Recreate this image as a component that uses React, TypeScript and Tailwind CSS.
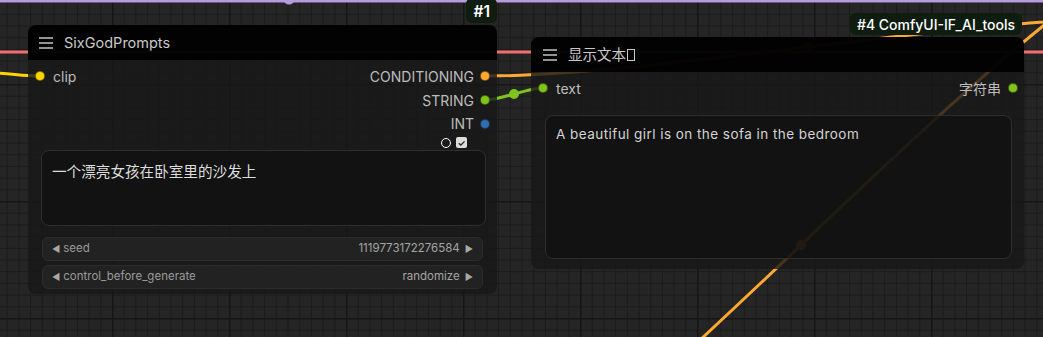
import React from 'react';

const ORANGE = '#ffa931';
const GREEN = '#7fc31c';

function Grid() {
  return (
    <svg className="absolute inset-0" width="1043" height="337">
      <defs>
        <pattern id="minor" x="6.7" y="2.1" width="11.7" height="11.7" patternUnits="userSpaceOnUse">
          <rect x="0" y="0" width="1" height="11.7" fill="#1b1b1b" />
          <rect x="0" y="0" width="11.7" height="1" fill="#1b1b1b" />
        </pattern>
        <pattern id="major" x="112" y="84" width="117" height="117" patternUnits="userSpaceOnUse">
          <rect x="-1" y="0" width="2.5" height="117" fill="#161616" />
          <rect x="0" y="-1" width="117" height="2.5" fill="#161616" />
        </pattern>
      </defs>
      <rect width="1043" height="337" fill="#252525" />
      <rect width="1043" height="337" fill="url(#minor)" />
      <rect width="1043" height="337" fill="url(#major)" />
    </svg>
  );
}

function Links() {
  return (
    <svg className="absolute inset-0" width="1043" height="337" fill="none">
      <line x1="0" y1="1" x2="1043" y2="1" stroke="#b39ddf" strokeWidth="3" />
      <circle cx="289" cy="-1" r="5.5" fill="#b39ddf" />
      <line x1="0" y1="52" x2="1043" y2="52" stroke="#ef7070" strokeWidth="3" />
      <path d="M -10 73 C 10 73, 20 76, 39 76" stroke="#ffd500" strokeWidth="3" />
      <path d="M 485 76 C 647 76, 969 18, 1131 18" stroke={ORANGE} strokeWidth="3" />
      <circle cx="808" cy="47" r="5" fill={ORANGE} />
      <path d="M 231 625 C 571 625, 1031 -135, 1371 -135" stroke={ORANGE} strokeWidth="3" />
      <circle cx="801" cy="245" r="5" fill={ORANGE} />
      <path d="M 485 100 C 500 100, 528 88, 543 88" stroke={GREEN} strokeWidth="3" />
      <circle cx="514" cy="94" r="5" fill={GREEN} />
    </svg>
  );
}

function Hamburger() {
  return (
    <svg width="14" height="12" viewBox="0 0 14 12" className="shrink-0">
      <path d="M0 1h14M0 6h14M0 11h14" stroke="#c4c4c4" strokeWidth="1.7" />
    </svg>
  );
}

function Dot({ color }: { color: string }) {
  return <span className="block w-[10px] h-[10px] rounded-full border border-black/50 shrink-0" style={{ backgroundColor: color }} />;
}

function Widget({ label, value }: { label: string; value: string }) {
  return (
    <div className="flex items-center h-6 rounded-md bg-[#222222] border border-[#2c2c2c] px-[9px] text-[11.5px] text-[#9a9a9a]">
      <span className="text-[9px] text-[#a8a8a8] mr-[3px]">◀</span>
      <span>{label}</span>
      <span className="ml-auto text-[#a5a5a5]">{value}</span>
      <span className="text-[9px] text-[#a8a8a8] ml-[5px]">▶</span>
    </div>
  );
}

export default function App() {
  return (
    <div className="relative w-[1043px] h-[337px] overflow-hidden bg-[#252525] font-['Inter','Noto_Sans_CJK_SC',sans-serif]">
      <Grid />
      <Links />

      {/* node #1 */}
      <div className="absolute left-[28px] top-[25px] w-[469px] h-[269px] rounded-lg bg-[#181818]/80 flex flex-col">
        <div className="absolute right-0 -top-[27px] h-[25px] px-[7px] pt-[2px] rounded-md bg-[#0f1d11] text-white text-[15.5px] font-semibold flex items-center">
          #1
        </div>
        <div className="h-[35px] rounded-t-lg bg-black/90 flex items-center gap-[11px] pl-[11px] text-[14.5px] text-[#c8c8c8]">
          <Hamburger />
          <span>SixGodPrompts</span>
        </div>
        <div className="flex justify-between pt-1 px-[7px] text-[14px] text-[#bdbdbd]">
          <div className="flex flex-col">
            <div className="h-6 flex items-center gap-[8px]">
              <Dot color="#ffd500" />
              <span>clip</span>
            </div>
          </div>
          <div className="flex flex-col items-end">
            <div className="h-6 flex items-center gap-[6px]">
              <span>CONDITIONING</span>
              <Dot color={ORANGE} />
            </div>
            <div className="h-6 flex items-center gap-[6px]">
              <span>STRING</span>
              <Dot color={GREEN} />
            </div>
            <div className="h-[23px] flex items-center gap-[6px]">
              <span>INT</span>
              <Dot color="#2f6fb0" />
            </div>
          </div>
        </div>
        <div className="flex justify-end items-center gap-[5px] h-[15px] pr-[30px]">
          <span className="block w-[10px] h-[10px] rounded-full border-[1.5px] border-white" />
          <span className="flex items-center justify-center w-[11px] h-[11px] rounded-[2px] bg-[#dcdcdc] text-[9px] leading-none text-[#222] font-bold">✓</span>
        </div>
        <div className="ml-[13px] w-[445px] h-[76px] rounded-lg border border-[#2e2e2e] bg-[#101010]/70 px-[10px] pt-[11px] text-[14.6px] text-[#dedede]">
          一个漂亮女孩在卧室里的沙发上
        </div>
        <div className="ml-[14px] w-[441px] mt-[11px] flex flex-col gap-1">
          <Widget label="seed" value="1119773172276584" />
          <Widget label="control_before_generate" value="randomize" />
        </div>
      </div>

      {/* node #4 */}
      <div className="absolute left-[531px] top-[37px] w-[493px] h-[232px] rounded-lg bg-[#181818]/80 flex flex-col">
        <div className="absolute right-[2px] -top-[24px] h-[22px] px-[7px] rounded-md bg-[#0f1d11] text-white text-[14px] font-medium flex items-center">
          #4 ComfyUI-IF_AI_tools
        </div>
        <div className="h-[35px] rounded-t-lg bg-black/90 flex items-center gap-[11px] pl-[12px] text-[14.5px] text-[#c8c8c8]">
          <Hamburger />
          <span className="flex items-center">
            显示文本
            <span className="inline-block w-[8px] h-[12px] border border-[#c8c8c8] ml-[1px]" />
          </span>
        </div>
        <div className="flex justify-between pt-1 pl-[7px] pr-[6px] text-[14px] text-[#bdbdbd]">
          <div className="h-6 flex items-center gap-[8px]">
            <Dot color={GREEN} />
            <span>text</span>
          </div>
          <div className="h-6 flex items-center gap-[7px]">
            <span>字符串</span>
            <Dot color={GREEN} />
          </div>
        </div>
        <div className="ml-[14px] mt-[15px] w-[467px] h-[144px] rounded-lg border border-[#2e2e2e] bg-[#101010]/70 px-[10px] pt-[8px] text-[13.5px] tracking-[0.45px] text-[#d4d4d4]">
          A beautiful girl is on the sofa in the bedroom
        </div>
      </div>
    </div>
  );
}
